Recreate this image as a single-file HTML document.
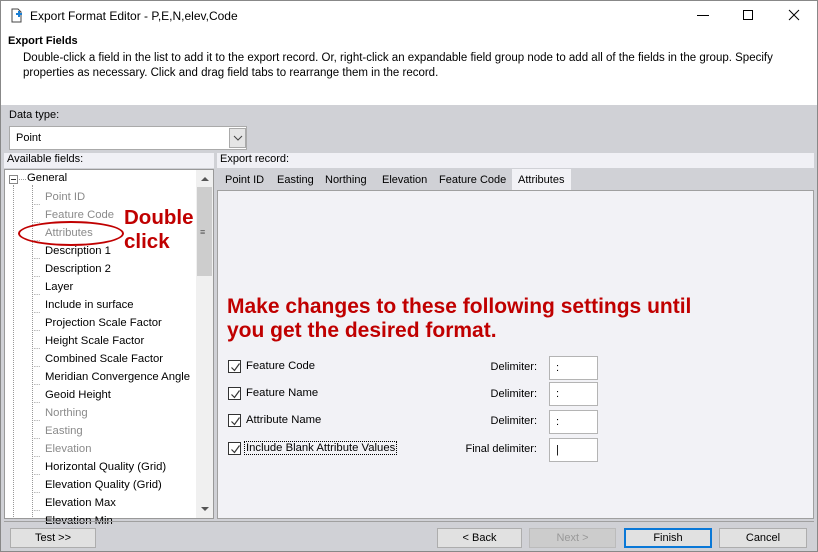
<!DOCTYPE html>
<html><head><style>
*{margin:0;padding:0;box-sizing:border-box}
body{width:818px;height:552px;overflow:hidden;font-family:"Liberation Sans",sans-serif;font-size:11px;color:#000;background:#d0d1d6;position:relative}
.a{position:absolute;white-space:nowrap}
.g{color:#8a8a8a}
.btn{position:absolute;top:528px;height:20px;background:#e1e1e1;border:1px solid #adadad;text-align:center;line-height:18px;font-size:11px}
.cb{position:absolute;left:228px;width:13px;height:13px;border:1px solid #333;background:#fff}
.cb svg{position:absolute;left:1px;top:1px}
.inp{position:absolute;left:549px;width:49px;height:24px;background:#fff;border:1px solid #b4b4b4;font-size:11px;padding:5px 0 0 6px}
.dl{position:absolute;width:120px;left:417px;text-align:right}
.red{color:#c00000;font-weight:bold;font-size:20.5px;position:absolute;white-space:nowrap}
</style></head><body>
<div class="a" style="left:0;top:0;width:818px;height:105px;background:#fff"></div>
<div class="a" style="left:0;top:0;width:818px;height:552px;border:1px solid #888"></div>
<svg class="a" style="left:10px;top:8px" width="14" height="15" viewBox="0 0 14 15"><path d="M2 1h6l3 3v10H2z" fill="none" stroke="#444"/><path d="M6 6h6M9 3v6" stroke="#1a7fd4" stroke-width="2"/></svg>
<div class="a" style="left:30px;top:9px;font-size:12px">Export Format Editor - P,E,N,elev,Code</div>
<div class="a" style="left:697px;top:15px;width:12px;height:1px;background:#000"></div>
<div class="a" style="left:743px;top:10px;width:10px;height:10px;border:1px solid #000"></div>
<svg class="a" style="left:788px;top:9px" width="12" height="12"><path d="M1 1L11 11M11 1L1 11" stroke="#000"/></svg>
<div class="a" style="left:8px;top:35px;font-weight:bold">Export Fields</div>
<div class="a" style="left:23px;top:52px;font-size:11.5px">Double-click a field in the list to add it to the export record. Or, right-click an expandable field group node to add all of the fields in the group. Specify</div>
<div class="a" style="left:23px;top:67px;font-size:11.5px">properties as necessary. Click and drag field tabs to rearrange them in the record.</div>

<div class="a" style="left:9px;top:109px">Data type:</div>
<div class="a" style="left:9px;top:126px;width:238px;height:24px;background:#fff;border:1px solid #aaa"><span class="a" style="left:6px;top:5px">Point</span>
<div class="a" style="left:219px;top:1px;width:17px;height:20px;background:#e5e5e5;border:1px solid #aaa"><svg class="a" style="left:3px;top:6px" width="10" height="6"><path d="M1 1l4 4 4-4" stroke="#444" fill="none"/></svg></div></div>

<div class="a" style="left:4px;top:153px;width:210px;height:15px;background:#f0f0f5"><span class="a" style="left:3px;top:0">Available fields:</span></div>
<div class="a" style="left:217px;top:153px;width:597px;height:15px;background:#f0f0f5"><span class="a" style="left:3px;top:0">Export record:</span></div>

<div class="a" style="left:4px;top:169px;width:210px;height:350px;background:#fff;border:1px solid #999;overflow:hidden">
<div class="a" style="left:191px;top:0;width:17px;height:348px;background:#f0f0f0"></div>
<div class="a" style="left:192px;top:17px;width:15px;height:89px;background:#cdcdcd"></div>
<svg class="a" style="left:195px;top:6px" width="10" height="6"><path d="M1 5L5 1 9 5z" fill="#555"/></svg>
<svg class="a" style="left:195px;top:336px" width="10" height="6"><path d="M1 1L5 5 9 1z" fill="#555"/></svg>
<div class="a" style="left:195px;top:57px;font-size:9px;color:#555">≡</div>
<div class="a" style="left:4px;top:5px;width:9px;height:9px;border:1px solid #888;background:#fff"></div>
<div class="a" style="left:6px;top:9px;width:5px;height:1px;background:#333"></div>
<div class="a" style="left:14px;top:9px;width:7px;border-top:1px dotted #999"></div>
<div class="a" style="left:8px;top:15px;height:340px;border-left:1px dotted #999"></div>
<div class="a" style="left:27px;top:15px;height:340px;border-left:1px dotted #999"></div>
<div class="a" style="left:22px;top:2px;font-size:11.3px">General</div>
</div>
<div class="a" style="left:45px;top:188px;line-height:18px;font-size:11.3px">
<div class="g">Point ID</div><div class="g">Feature Code</div><div class="g">Attributes</div><div>Description 1</div><div>Description 2</div><div>Layer</div><div>Include in surface</div><div>Projection Scale Factor</div><div>Height Scale Factor</div><div>Combined Scale Factor</div><div>Meridian Convergence Angle</div><div>Geoid Height</div><div class="g">Northing</div><div class="g">Easting</div><div class="g">Elevation</div><div>Horizontal Quality (Grid)</div><div>Elevation Quality (Grid)</div><div>Elevation Max</div><div style="height:12px;overflow:hidden">Elevation Min</div>
</div>
<div class="a" style="left:33px;top:196px;line-height:18px;color:#999;font-size:8px;letter-spacing:-1px">
<div>····</div><div>····</div><div>····</div><div>····</div><div>····</div><div>····</div><div>····</div><div>····</div><div>····</div><div>····</div><div>····</div><div>····</div><div>····</div><div>····</div><div>····</div><div>····</div><div>····</div><div>····</div></div>
<div class="a" style="left:18px;top:221px;width:106px;height:25px;border:2.5px solid #c00000;border-radius:50%"></div>
<div class="red" style="left:124px;top:206px">Double</div>
<div class="red" style="left:124px;top:230px">click</div>

<div class="a" style="left:218px;top:169px;width:596px;height:21px;background:#d0d1d6"></div>
<div class="a" style="left:512px;top:169px;width:59px;height:22px;background:#f2f2f6"></div>
<div class="a" style="left:225px;top:174px">Point ID</div>
<div class="a" style="left:277px;top:174px">Easting</div>
<div class="a" style="left:325px;top:174px">Northing</div>
<div class="a" style="left:382px;top:174px">Elevation</div>
<div class="a" style="left:439px;top:174px">Feature Code</div>
<div class="a" style="left:518px;top:174px">Attributes</div>
<div class="a" style="left:217px;top:190px;width:597px;height:329px;background:#f2f2f6;border:1px solid #a0a0a0"></div>

<div class="red" style="left:227px;top:295px;font-size:21px">Make changes to these following settings until</div>
<div class="red" style="left:227px;top:319px;font-size:21px">you get the desired format.</div>

<div class="cb" style="top:360px"><svg width="11" height="11"><path d="M1.5 5.5l3 3 5-7" stroke="#333" fill="none" stroke-width="1.2"/></svg></div>
<div class="cb" style="top:387px"><svg width="11" height="11"><path d="M1.5 5.5l3 3 5-7" stroke="#333" fill="none" stroke-width="1.2"/></svg></div>
<div class="cb" style="top:414px"><svg width="11" height="11"><path d="M1.5 5.5l3 3 5-7" stroke="#333" fill="none" stroke-width="1.2"/></svg></div>
<div class="cb" style="top:442px"><svg width="11" height="11"><path d="M1.5 5.5l3 3 5-7" stroke="#333" fill="none" stroke-width="1.2"/></svg></div>
<div class="a" style="left:246px;top:360px;font-size:11.3px">Feature Code</div>
<div class="a" style="left:246px;top:387px;font-size:11.3px">Feature Name</div>
<div class="a" style="left:246px;top:414px;font-size:11.3px">Attribute Name</div>
<div class="a" style="left:244px;top:441px;border:1px dotted #000;padding:0 1px;font-size:11.3px">Include Blank Attribute Values</div>
<div class="dl" style="top:361px">Delimiter:</div>
<div class="dl" style="top:388px">Delimiter:</div>
<div class="dl" style="top:415px">Delimiter:</div>
<div class="dl" style="top:443px">Final delimiter:</div>
<div class="inp" style="top:356px">:</div>
<div class="inp" style="top:382px">:</div>
<div class="inp" style="top:410px">:</div>
<div class="inp" style="top:438px">|</div>

<div class="a" style="left:4px;top:521px;width:810px;height:1px;background:#a0a0a0"></div>
<div class="btn" style="left:10px;width:86px">Test &gt;&gt;</div>
<div class="btn" style="left:437px;width:85px">&lt; Back</div>
<div class="btn" style="left:529px;width:87px;color:#999;background:#ccc;border-color:#bbb">Next &gt;</div>
<div class="btn" style="left:624px;width:88px;border:2px solid #0a78d7;line-height:16px">Finish</div>
<div class="btn" style="left:719px;width:88px">Cancel</div>
</body></html>
